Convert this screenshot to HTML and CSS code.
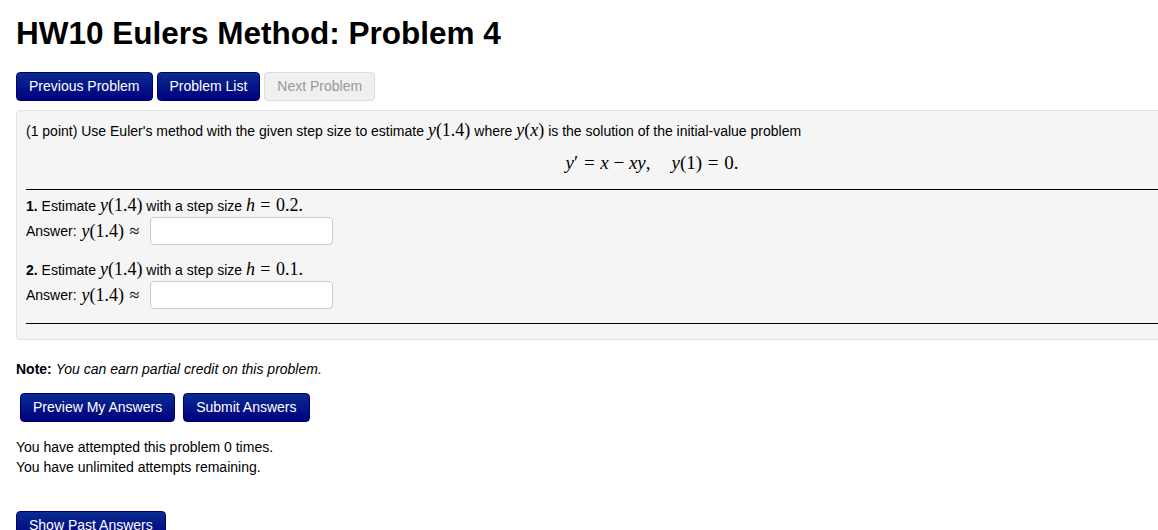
FILE: index.html
```html
<!DOCTYPE html>
<html lang="en">
  <head>
    <meta charset="UTF-8" />
    <title>HW10 Eulers Method: Problem 4</title>
    <link rel="stylesheet" href="styles.css">
  </head>
  <body>
    <div class="page">
      <h1>HW10 Eulers Method: Problem 4</h1>

      <div class="nav-buttons">
        <button class="btn">Previous Problem</button>
        <button class="btn">Problem List</button>
        <button class="btn" disabled>Next Problem</button>
      </div>

      <div class="problem">
        <p class="intro">
          (1 point) Use Euler's method with the given step size to estimate
          <span class="math"><i>y</i>(1.4)</span> where
          <span class="math"><i>y</i>(<i>x</i>)</span> is the solution of the
          initial-value problem
        </p>
        <div class="display">
          <span class="math"><i>y</i>&prime;<span class="rel">=</span><i>x</i><span class="bin">&minus;</span><i>xy</i>,<span class="quad"></span><i>y</i>(1)<span class="rel">=</span>0.</span>
        </div>
        <hr />

        <div class="part">
          <b>1.</b> Estimate <span class="math"><i>y</i>(1.4)</span> with a step
          size <span class="math"><i>h</i><span class="rel">=</span>0.2.</span>
        </div>
        <div class="answer-row">
          Answer: <span class="math"><i>y</i>(1.4)<span class="rel">&asymp;</span></span>
          <input type="text" class="answer" />
        </div>

        <div class="part second">
          <b>2.</b> Estimate <span class="math"><i>y</i>(1.4)</span> with a step
          size <span class="math"><i>h</i><span class="rel">=</span>0.1.</span>
        </div>
        <div class="answer-row">
          Answer: <span class="math"><i>y</i>(1.4)<span class="rel">&asymp;</span></span>
          <input type="text" class="answer" />
        </div>
        <hr />
      </div>

      <p class="note"><b>Note:</b> <i>You can earn partial credit on this problem.</i></p>

      <div class="submit-buttons">
        <button class="btn">Preview My Answers</button>
        <button class="btn">Submit Answers</button>
      </div>

      <div class="attempts">
        You have attempted this problem 0 times.<br />
        You have unlimited attempts remaining.
      </div>

      <button class="btn past">Show Past Answers</button>
    </div>
  </body>
</html>
```

FILE: styles.css
```css
* {
  box-sizing: border-box;
}

html {
  overflow: hidden;
}

body {
  margin: 0;
  font-family: "Liberation Sans", Arial, sans-serif;
  font-size: 14px;
  color: #000;
  background: #fff;
}

.page {
  padding: 0 0 0 16px;
}

h1 {
  margin: 0;
  padding-top: 15px;
  font-size: 31.5px;
  line-height: 36px;
  font-weight: bold;
}

.nav-buttons {
  display: flex;
  gap: 4px;
  margin-top: 21px;
}

.btn {
  font-family: "Liberation Sans", Arial, sans-serif;
  font-size: 14px;
  line-height: 19px;
  padding: 4px 12px;
  color: #fff;
  background: linear-gradient(#0a2c8f, #00007f);
  border: 1px solid #00006a;
  border-radius: 4px;
  cursor: pointer;
}

.btn:disabled {
  color: #999;
  background: #f0f0f0;
  border-color: #dcdcdc;
  cursor: default;
}

.problem {
  width: 1272px;
  margin-top: 9px;
  padding: 10px 9px 15px;
  background: #f5f5f5;
  border: 1px solid #e3e3e3;
  border-radius: 4px;
}

.intro {
  margin: 0;
  line-height: 18px;
}

.math {
  font-family: "Liberation Serif", "Times New Roman", serif;
  font-size: 18px;
  line-height: 1;
  white-space: nowrap;
}

.math i {
  font-style: italic;
}

.rel {
  margin: 0 0.3em;
}

.bin {
  margin: 0 0.25em;
}

.quad {
  display: inline-block;
  width: 1.1em;
}

.display .math {
  font-size: 19px;
}

.display {
  margin-top: 13px;
  line-height: 22px;
  text-align: center;
}

.problem hr {
  margin: 14px 0 0;
  border: 0;
  border-top: 1px solid #000;
}

.part {
  margin-top: 6px;
  line-height: 21px;
}

.part.second {
  margin-top: 15px;
}

.answer-row {
  display: flex;
  align-items: center;
  gap: 5px;
}

.answer {
  width: 183px;
  height: 28px;
  border: 1px solid #ccc;
  border-radius: 4px;
  background: #fff;
}

.note {
  margin: 20px 0 0;
  line-height: 18px;
}

.submit-buttons {
  display: flex;
  gap: 8px;
  margin-top: 15px;
  padding-left: 4px;
}

.attempts {
  margin-top: 15px;
  line-height: 20px;
}

.past {
  margin-top: 34px;
}
```
